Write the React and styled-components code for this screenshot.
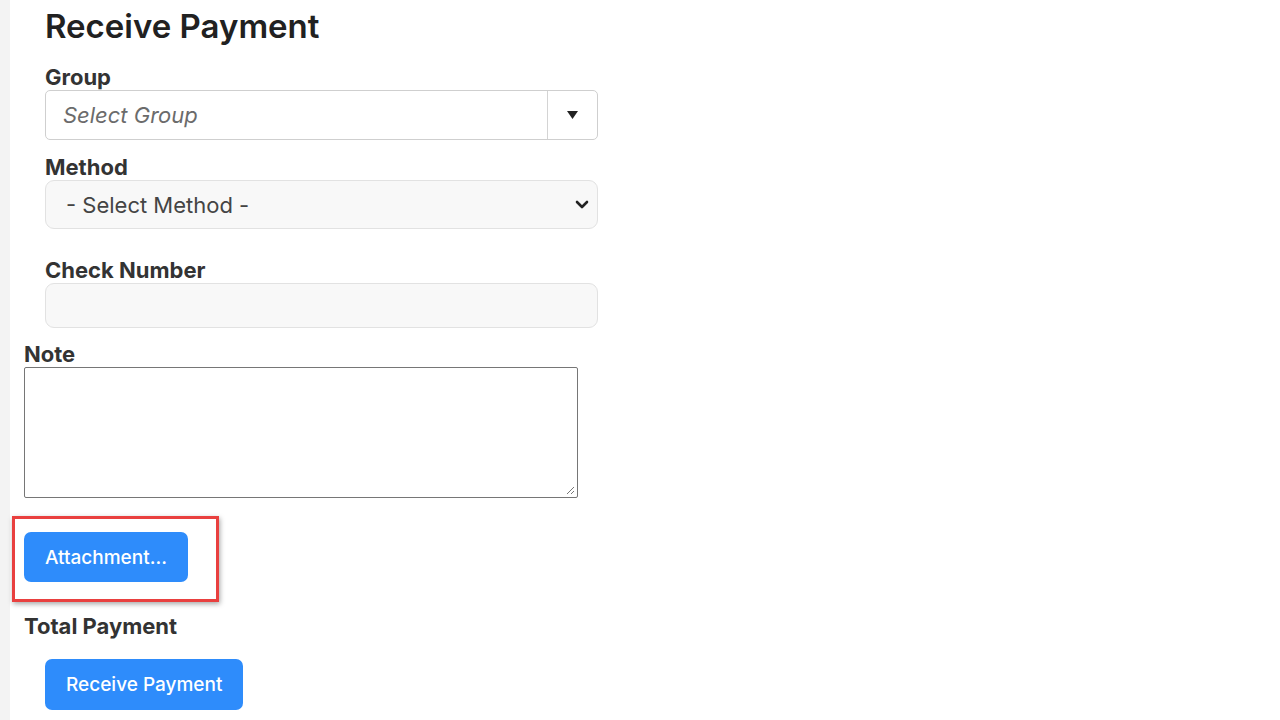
import React from 'react';
import styled, { createGlobalStyle } from 'styled-components';

const GlobalStyle = createGlobalStyle`
  html, body {
    margin: 0;
    padding: 0;
    background: #ffffff;
    font-family: Inter, "Noto Sans", sans-serif;
    color: #333;
  }
`;

const Page = styled.div`
  display: flex;
  min-height: 720px;
  width: 1280px;
  overflow: hidden;
`;

const SideStrip = styled.div`
  width: 10px;
  flex: none;
  background: #f3f3f3;
`;

const Main = styled.main`
  flex: 1;
  padding-left: 14px;
  display: flex;
  flex-direction: column;
  align-items: flex-start;
`;

const Indented = styled.div`
  padding-left: 21px;
  display: flex;
  flex-direction: column;
`;

const Title = styled.h2`
  margin: 6px 0 0;
  font-size: 33px;
  line-height: 40px;
  font-weight: 600;
  color: #212121;
`;

const Label = styled.label`
  display: block;
  font-size: 22px;
  line-height: 24px;
  font-weight: 700;
  color: #333;
  margin-top: ${p => p.$top || 0}px;
  margin-bottom: 1px;
`;

const Combo = styled.div`
  width: 553px;
  height: 50px;
  box-sizing: border-box;
  border: 1px solid #cfcfcf;
  border-radius: 5px;
  background: #fff;
  display: flex;
  align-items: stretch;
`;

const ComboText = styled.div`
  flex: 1;
  display: flex;
  align-items: center;
  padding-left: 17px;
  font-size: 22px;
  font-style: italic;
  color: #6b6b6b;
`;

const ComboToggle = styled.div`
  width: 49px;
  border-left: 1px solid #d4d4d4;
  display: flex;
  align-items: center;
  justify-content: center;
`;

const Select = styled.div`
  width: 553px;
  height: 49px;
  box-sizing: border-box;
  border: 1px solid #e2e2e2;
  border-radius: 9px;
  background: #f8f8f8;
  display: flex;
  align-items: center;
  justify-content: space-between;
  padding: 0 8px 0 20px;
  font-size: 22px;
  color: #444;
`;

const TextInput = styled.div`
  width: 553px;
  height: 45px;
  box-sizing: border-box;
  border: 1px solid #e2e2e2;
  border-radius: 9px;
  background: #f8f8f8;
`;

const NoteArea = styled.div`
  position: relative;
  width: 554px;
  height: 131px;
  box-sizing: border-box;
  border: 1px solid #767676;
  border-radius: 2px;
  background: #fff;
`;

const ResizeGrip = styled.svg`
  position: absolute;
  right: 2px;
  bottom: 2px;
`;

const Highlight = styled.div`
  margin: 18px 0 0 -12px;
  padding: 13px 28px 17px 9px;
  border: 3px solid #e9403f;
  box-shadow: 1px 2px 5px rgba(0, 0, 0, 0.35);
  display: flex;
`;

const Button = styled.button`
  height: ${p => p.$h || 50}px;
  padding: 0 ${p => p.$px || 21}px;
  border: none;
  border-radius: 7px;
  background: #2e8cfb;
  color: #fff;
  font-family: Inter, "Noto Sans", sans-serif;
  font-size: 19px;
  font-weight: 500;
  cursor: pointer;
`;

const ButtonRow = styled.div`
  padding-left: 21px;
  margin-top: 20px;
`;

export default function App() {
  return (
    <>
      <GlobalStyle />
      <Page>
        <SideStrip />
        <Main>
          <Indented>
            <Title>Receive Payment</Title>
            <Label $top={19}>Group</Label>
            <Combo>
              <ComboText>Select Group</ComboText>
              <ComboToggle>
                <svg width="11" height="8" viewBox="0 0 11 8">
                  <path d="M0 0h11L5.5 8z" fill="#222" />
                </svg>
              </ComboToggle>
            </Combo>
            <Label $top={15}>Method</Label>
            <Select>
              <span>- Select Method -</span>
              <svg width="14" height="10" viewBox="0 0 14 10">
                <path d="M2 2l5 5 5-5" fill="none" stroke="#222" strokeWidth="2.6" strokeLinecap="round" strokeLinejoin="round" />
              </svg>
            </Select>
            <Label $top={29}>Check Number</Label>
            <TextInput />
          </Indented>
          <Label $top={14}>Note</Label>
          <NoteArea>
            <ResizeGrip width="10" height="10" viewBox="0 0 10 10">
              <path d="M9 2L2 9M9 6L6 9" stroke="#777" strokeWidth="1" />
            </ResizeGrip>
          </NoteArea>
          <Highlight>
            <Button>Attachment...</Button>
          </Highlight>
          <Label $top={12}>Total Payment</Label>
          <ButtonRow>
            <Button $h={51}>Receive Payment</Button>
          </ButtonRow>
        </Main>
      </Page>
    </>
  );
}
